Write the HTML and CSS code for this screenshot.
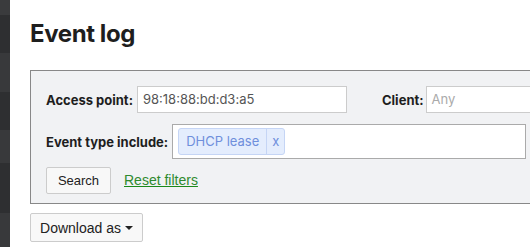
FILE: index.html
```html
<!DOCTYPE html>
<html>
<head>
<meta charset="utf-8">
<link rel="stylesheet" href="styles.css">
</head>
<body>
<div class="app">
  <div class="sidebar">
    <div class="band b1"></div>
    <div class="band b2"></div>
    <div class="band b3"></div>
    <div class="band b4"></div>
    <div class="band b5"></div>
    <div class="band b6"></div>
    <div class="band b7"></div>
  </div>
  <main class="main">
    <h1 class="title">Event log</h1>
    <div class="panel">
      <div class="row row1">
        <label class="label">Access point:</label>
        <div class="input ap">98:18:88:bd:d3:a5</div>
        <label class="label client-label">Client:</label>
        <div class="input client placeholder">Any</div>
      </div>
      <div class="row row2">
        <label class="label">Event type include:</label>
        <div class="multi">
          <span class="tag"><span class="tag-text">DHCP lease</span><span class="tag-x">x</span></span>
        </div>
      </div>
      <div class="row row3">
        <button class="btn search">Search</button>
        <a class="reset" href="#">Reset filters</a>
      </div>
    </div>
    <button class="btn download">Download as <span class="caret"></span></button>
  </main>
</div>
</body>
</html>
```
FILE: styles.css
```css
html, body {
  margin: 0;
  padding: 0;
  background: #ffffff;
  overflow: hidden;
  width: 530px;
  height: 247px;
}
.app {
  display: flex;
  height: 247px;
  font-family: "Inter", "Liberation Sans", sans-serif;
  color: #222;
}
.sidebar {
  width: 10px;
  flex: none;
  display: flex;
  flex-direction: column;
}
.band { flex: none; }
.b1 { height: 15px; background: #3a3b3d; }
.b2 { height: 38px; background: #2e2f31; }
.b3 { height: 39px; background: #38393b; }
.b4 { height: 38px; background: #2e2f31; }
.b5 { height: 33px; background: #38393b; }
.b6 { height: 50px; background: #2e2f31; }
.b7 { height: 34px; background: #38393b; }
.main {
  padding-left: 20px;
  flex: none;
  width: 560px;
}
.title {
  margin: 0;
  padding-top: 20px;
  height: 70px;
  box-sizing: border-box;
  font-size: 24px;
  line-height: 28px;
  font-weight: 700;
  color: #1e1e1e;
  letter-spacing: -0.4px;
}
.panel {
  border: 1px solid #888;
  background: #f1f2f4;
  padding: 15px 0 8px 15px;
  height: 134px;
  box-sizing: border-box;
}
.row {
  display: flex;
  align-items: center;
}
.row2 { margin-top: 11px; }
.row3 { margin-top: 8px; }
.label {
  font-size: 13px;
  font-weight: 700;
  color: #1e1e1e;
  margin-right: 4px;
}
.input {
  height: 27px;
  box-sizing: border-box;
  border: 1px solid #ccc;
  background: #fff;
  font-size: 13px;
  line-height: 25px;
  padding-left: 5px;
  color: #555;
}
.ap { width: 210px; }
.client-label { margin-left: 35px; margin-right: 2px; }
.client { width: 120px; }
.placeholder { color: #aaa; }
.multi {
  width: 354px;
  height: 35px;
  box-sizing: border-box;
  border: 1px solid #aaa;
  background: #fff;
  display: flex;
  align-items: center;
  padding-left: 5px;
}
.tag {
  display: flex;
  height: 27px;
  box-sizing: border-box;
  border: 1px solid #c5d5f5;
  border-radius: 3px;
  background: #e4edfd;
  color: #6f8fdc;
  font-size: 13px;
  line-height: 25px;
}
.tag-text { padding: 0 7px; border-right: 1px solid #c5d5f5; }
.tag-x { padding: 0 5px; }
.btn {
  font-family: "Liberation Sans", Arial, sans-serif;
  font-size: 13px;
  color: #222;
  background: #f8f8f8;
  border: 1px solid #ccc;
  border-radius: 2px;
  box-sizing: border-box;
  padding: 0;
}
.search { width: 65px; height: 27px; }
.reset {
  font-family: "Liberation Sans", Arial, sans-serif;
  font-size: 14px;
  color: #2f8a2f;
  margin-left: 13px;
  text-decoration: underline;
  text-decoration-color: #1a8a1a;
  margin-top: -2px;
}
.download {
  margin-top: 9px;
  width: 113px;
  height: 29px;
  font-size: 14px;
  display: flex;
  align-items: center;
  justify-content: center;
  gap: 4px;
}
.caret {
  display: inline-block;
  width: 0;
  height: 0;
  border-left: 4px solid transparent;
  border-right: 4px solid transparent;
  border-top: 4px solid #222;
}
```
